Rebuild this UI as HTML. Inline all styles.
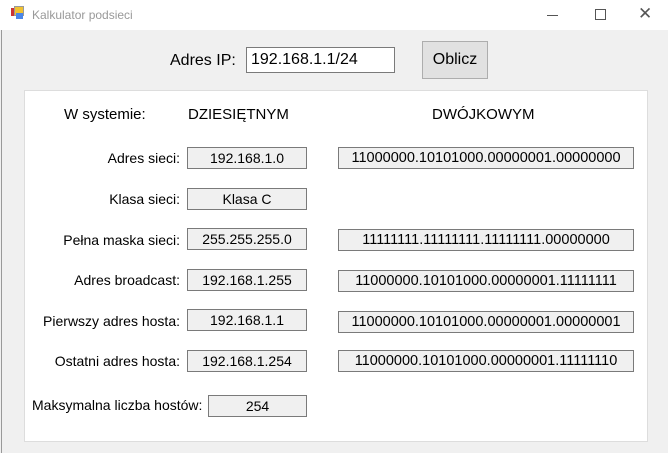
<!DOCTYPE html><html><head><style>
body{margin:0;width:668px;height:453px;overflow:hidden;background:#f0f0f0;font-family:"Liberation Sans",sans-serif;position:relative}
.a{position:absolute}
.t{font-size:14px;color:#000;white-space:nowrap}
.l{position:absolute;font-size:14px;right:488px;white-space:nowrap}
.b{position:absolute;background:#f0f0f0;border:1px solid #7a7a7a;box-sizing:border-box;height:22px;font-size:14px;text-align:center;line-height:20px;white-space:nowrap}
.d{left:187px;width:120px}
.n{left:338px;width:296px;font-size:14.5px}
</style></head><body>
<div class="a" style="left:0;top:0;width:668px;height:30px;background:#fff"></div>
<div class="a" style="left:11px;top:8px;width:8px;height:8px;background:#c33"></div>
<div class="a" style="left:14px;top:6px;width:8px;height:8px;background:#f1c232;border:1px solid #999"></div>
<div class="a" style="left:16px;top:13px;width:7px;height:6px;background:#4a86e8"></div>
<div class="a t" style="left:32px;top:8px;font-size:12px;color:#999">Kalkulator podsieci</div>
<div class="a" style="left:547px;top:15px;width:11px;height:1px;background:#555"></div>
<div class="a" style="left:595px;top:9px;width:9px;height:9px;border:1px solid #555"></div>
<div class="a t" style="left:638px;top:4px;font-size:17px;color:#555">✕</div>
<div class="a" style="left:1px;top:30px;width:1px;height:423px;background:#999"></div>
<div class="a t" style="left:170px;top:52px;font-size:16px">Adres IP:</div>
<div class="a" style="left:246px;top:47px;width:149px;height:26px;background:#fff;border:1px solid #7a7a7a;box-sizing:border-box;font-size:16px;padding:3px 0 0 4px">192.168.1.1/24</div>
<div class="a" style="left:422px;top:41px;width:66px;height:38px;background:#e1e1e1;border:1px solid #adadad;box-sizing:border-box;font-size:16px;text-align:center;line-height:36px">Oblicz</div>
<div class="a" style="left:24px;top:90px;width:624px;height:352px;background:#fff;border:1px solid #ddd;box-sizing:border-box"></div>
<div class="a t" style="left:64px;top:106px;font-size:15px">W systemie:</div>
<div class="a t" style="left:188px;top:106px;font-size:15px">DZIESIĘTNYM</div>
<div class="a t" style="left:432px;top:106px;font-size:15px">DWÓJKOWYM</div>
<div class="l" style="top:150px">Adres sieci:</div>
<div class="b d" style="top:147px">192.168.1.0</div>
<div class="b n" style="top:147px">11000000.10101000.00000001.00000000</div>
<div class="l" style="top:191px">Klasa sieci:</div>
<div class="b d" style="top:188px">Klasa C</div>
<div class="l" style="top:232px">Pełna maska sieci:</div>
<div class="b d" style="top:228px">255.255.255.0</div>
<div class="b n" style="top:229px">11111111.11111111.11111111.00000000</div>
<div class="l" style="top:272px">Adres broadcast:</div>
<div class="b d" style="top:269px">192.168.1.255</div>
<div class="b n" style="top:270px">11000000.10101000.00000001.11111111</div>
<div class="l" style="top:313px">Pierwszy adres hosta:</div>
<div class="b d" style="top:309px">192.168.1.1</div>
<div class="b n" style="top:311px">11000000.10101000.00000001.00000001</div>
<div class="l" style="top:353px">Ostatni adres hosta:</div>
<div class="b d" style="top:350px">192.168.1.254</div>
<div class="b n" style="top:350px">11000000.10101000.00000001.11111110</div>
<div class="a t" style="left:32px;top:397px">Maksymalna liczba hostów:</div>
<div class="b" style="left:208px;width:99px;top:395px">254</div>
</body></html>
